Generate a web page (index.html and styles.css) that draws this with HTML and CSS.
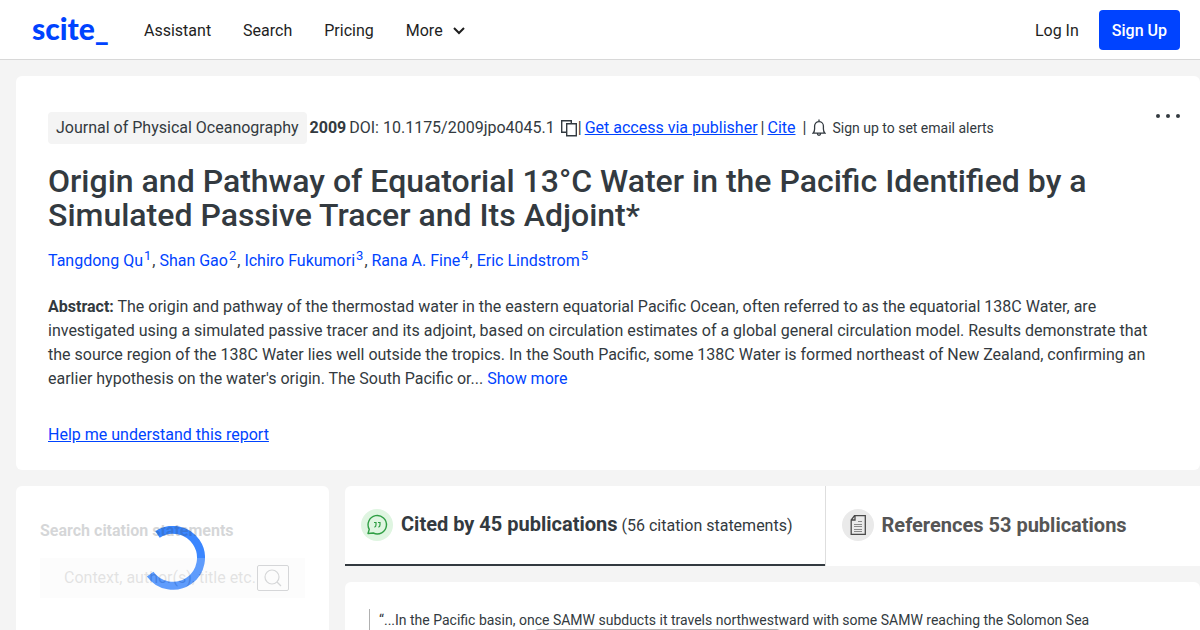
FILE: index.html
```html
<!DOCTYPE html>
<html lang="en">
<head>
    <meta charset="UTF-8">
    <meta name="viewport" content="width=device-width, initial-scale=1.0">
    <title>Origin and Pathway of Equatorial 13°C Water - scite</title>
    <link rel="stylesheet" href="styles.css">
</head>
<body>

<header class="navbar">
    <a href="#" class="logo">scite_</a>
    <nav class="nav-links">
        <a href="#">Assistant</a>
        <a href="#">Search</a>
        <a href="#">Pricing</a>
        <button type="button" class="more-button">More
            <svg width="12" height="8" viewBox="0 0 12 8" fill="none" stroke="currentColor" stroke-width="2" aria-hidden="true"><path d="M1 1l5 5 5-5"/></svg>
        </button>
    </nav>
    <a href="#" class="login">Log In</a>
    <a href="#" class="signup">Sign Up</a>
</header>

<main>
    <section class="card paper">
        <div class="paper-top">
            <div class="paper-meta">
                <span class="journal">Journal of Physical Oceanography</span>
                <strong>2009</strong>
                <span>DOI: 10.1175/2009jpo4045.1</span>
                <span class="copy">
                    <button type="button" class="icon-button" aria-label="Copy DOI">
                        <svg width="18" height="18" viewBox="0 0 18 18" fill="none" stroke="currentColor" stroke-width="1.4"><path d="M6 13.3H1.7V1.7h9.6V4M6.7 4.7h9.6v12H6.7z"/></svg>
                    </button>|
                </span>
                <a href="#">Get access via publisher</a>
                <span>|</span>
                <a href="#">Cite</a>
                <span class="divider">|</span>
                <button type="button" class="icon-button alerts">
                    <svg width="14" height="18" viewBox="0 0 14 18" fill="none" stroke="currentColor" stroke-width="1.3" aria-hidden="true"><path d="M7 2.4V.6M1 14.2c1.3-1.2 1.6-2.4 1.6-4.2V7a4.4 4.4 0 0 1 8.8 0v3c0 1.8.3 3 1.6 4.2zM5.4 14.6a1.6 1.8 0 0 0 3.2 0"/></svg>
                    Sign up to set email alerts
                </button>
            </div>
            <button type="button" class="icon-button menu" aria-label="More options">
                <svg width="24" height="4" viewBox="0 0 24 4" fill="currentColor"><circle cx="2" cy="2" r="2"/><circle cx="12" cy="2" r="2"/><circle cx="22" cy="2" r="2"/></svg>
            </button>
        </div>
        <h1>Origin and Pathway of Equatorial 13°C Water in the Pacific Identified by a Simulated Passive Tracer and Its Adjoint*</h1>
        <p class="authors"><a href="#">Tangdong Qu<sup>1</sup></a>, <a href="#">Shan Gao<sup>2</sup></a>, <a href="#">Ichiro Fukumori<sup>3</sup></a>, <a href="#">Rana A. Fine<sup>4</sup></a>, <a href="#">Eric Lindstrom<sup>5</sup></a></p>
        <p class="abstract"><strong>Abstract:</strong> The origin and pathway of the thermostad water in the eastern equatorial Pacific Ocean, often referred to as the equatorial 138C Water, are investigated using a simulated passive tracer and its adjoint, based on circulation estimates of a global general circulation model. Results demonstrate that the source region of the 138C Water lies well outside the tropics. In the South Pacific, some 138C Water is formed northeast of New Zealand, confirming an earlier hypothesis on the water's origin. The South Pacific or... <a href="#">Show more</a></p>
        <a href="#" class="help-link">Help me understand this report</a>
    </section>

    <div class="columns">
        <aside class="card sidebar">
            <svg class="spinner" width="64" height="64" viewBox="0 0 64 64" fill="none" stroke="#3a86ff" stroke-width="8" aria-hidden="true"><path d="M16.5 8.5A28 28 0 1 1 9.2 48.1"/></svg>
            <form class="search-form">
                <label for="citation-search">Search citation statements</label>
                <div class="search-box">
                    <input type="text" id="citation-search" placeholder="Context, author(s), title etc.">
                    <button type="button" aria-label="Search">
                        <svg width="18" height="18" viewBox="0 0 18 18" fill="none" stroke="currentColor" stroke-width="1.2"><circle cx="8" cy="8" r="7"/><path d="M13 13l4 4"/></svg>
                    </button>
                </div>
            </form>
        </aside>

        <div class="results">
            <div class="tabs">
                <button type="button" class="tab active">
                    <svg width="32" height="32" viewBox="0 0 32 32" fill="none" aria-hidden="true"><circle cx="16" cy="16" r="16" fill="#dff5e1"/><path d="M7 24.5l1.3-4.2a9.2 9.2 0 1 1 4 3.7z" stroke="#2f9e44" stroke-width="1.4" stroke-linejoin="round"/><path d="M13 13.5h2v2.2q0 2-1.6 2.6M17 13.5h2v2.2q0 2-1.6 2.6" stroke="#2f9e44" stroke-width="1.2"/></svg>
                    <span><span class="tab-title">Cited by 45 publications</span> (56 citation statements)</span>
                </button>
                <button type="button" class="tab">
                    <svg width="32" height="32" viewBox="0 0 32 32" fill="none" aria-hidden="true"><circle cx="16" cy="16" r="16" fill="#eaeaea"/><path d="M12.5 6.7h10.8v18.6H9.2V11zM13 6.7V11H9.2" stroke="#4a4a4a" stroke-width="1.3"/><path d="M16 12.5h4M12 15.5h8M12 17.5h8M12 20.5h8M12 22.5h8" stroke="#8a8a8a"/></svg>
                    <span class="tab-title">References 53 publications</span>
                </button>
            </div>
            <article class="card citation">
                <blockquote>“...In the Pacific basin, once SAMW subducts it travels northwestward with some SAMW reaching the Solomon Sea</blockquote>
                <div class="popover"></div>
            </article>
        </div>
    </div>
</main>

</body>
</html>
```
FILE: styles.css
```css
* {
    box-sizing: border-box;
}
body {
    margin: 0;
    font-family: Roboto, Arial, sans-serif;
    font-size: 16px;
    line-height: 24px;
    background-color: #f4f4f4;
    color: #333a40;
}
a {
    color: #0043ff;
}
button {
    font: inherit;
    color: inherit;
    border: none;
    padding: 0;
    background: none;
    cursor: pointer;
}
svg {
    display: block;
    flex: none;
}
.card {
    background-color: white;
    border-radius: 6px;
}
.navbar {
    display: flex;
    align-items: center;
    height: 60px;
    padding: 0 20px 0 32px;
    background-color: white;
    border-bottom: 1px solid #d8d8d8;
}
.navbar a {
    text-decoration: none;
}
.logo {
    min-width: 80px;
    padding-bottom: 4px;
    font-family: Lato, sans-serif;
    font-size: 30px;
    font-weight: 900;
}
.nav-links {
    display: flex;
    gap: 32px;
    margin: 0 auto 0 32px;
    padding-top: 2px;
}
.nav-links a,
.more-button,
.navbar .login {
    color: #1e1e1e;
}
.navbar .login {
    padding-top: 2px;
}
.more-button {
    display: flex;
    align-items: center;
    gap: 10px;
}
.signup {
    margin-left: 20px;
    padding: 9px 13px 7px;
    border-radius: 4px;
    background-color: #0043ff;
    color: white;
    font-weight: 500;
}
main {
    padding: 16px 0 0 16px;
}
.paper {
    padding: 36px 20px 23px 32px;
}
.paper-top {
    display: flex;
    justify-content: space-between;
    align-items: flex-start;
}
.paper-meta {
    display: flex;
    align-items: center;
    gap: 3px;
}
.journal {
    padding: 4px 8px;
    border-radius: 4px;
    background-color: #f4f4f4;
}
.divider {
    margin-left: 4px;
}
.icon-button {
    display: flex;
    align-items: center;
    gap: 6px;
}
.copy {
    display: flex;
    align-items: center;
    margin-left: 2px;
}
.alerts {
    margin-left: 3px;
    font-size: 14px;
}
.menu {
    padding-top: 2px;
}
h1 {
    margin: 20px 0 0;
    font-size: 32px;
    font-weight: 500;
    line-height: 34px;
}
.authors {
    margin: 17px 0 0;
}
.authors a {
    text-decoration: none;
}
sup {
    padding: 0 1px;
    font-size: 13px;
    line-height: 0;
}
.abstract {
    margin: 22px 0 32px;
    padding-right: 20px;
}
.abstract a {
    text-decoration: none;
}
.columns {
    display: grid;
    grid-template-columns: 313px 1fr;
    gap: 16px;
    margin-top: 16px;
}
.sidebar {
    position: relative;
    padding: 33px 24px;
}
.spinner {
    position: absolute;
    top: 40px;
    left: 125px;
}
.search-form {
    position: relative;
    opacity: 0.2;
}
.search-form label {
    font-weight: 700;
}
.search-box {
    display: flex;
    align-items: center;
    margin-top: 15px;
    padding: 7px 16px 7px 24px;
    background-color: #f4f4f4;
}
.search-box input {
    flex: 1;
    min-width: 0;
    padding: 0;
    border: none;
    background: none;
    font: inherit;
}
.search-box button {
    padding: 3px 6px;
    border: 1px solid #333a40;
    border-radius: 2px;
}
.tabs {
    display: flex;
    height: 80px;
    background-color: white;
    border-radius: 6px 0 0 0;
}
.tab {
    display: flex;
    align-items: center;
    gap: 8px;
    padding: 0 16px;
    border-left: 1px solid #dedede;
    padding-bottom: 2px;
    color: #555;
}
.tab.active {
    padding: 0 32px 0 16px;
    border-left: none;
    border-bottom: 2px solid #333a40;
    color: #333a40;
}
.tab-title {
    font-size: 20px;
    font-weight: 700;
}
.citation {
    position: relative;
    min-height: 140px;
    margin-top: 16px;
    padding: 27px 24px;
}
blockquote {
    margin: 0;
    padding-left: 9px;
    border-left: 1px solid #b0b0b0;
    font-size: 14px;
    line-height: 22px;
}
/* small box hanging under the first line of the quote */
.popover {
    position: absolute;
    top: 47px;
    left: 189px;
    width: 247px;
    height: 32px;
    border: 1px solid #b0b0b0;
    border-radius: 4px;
    background-color: white;
}
```
